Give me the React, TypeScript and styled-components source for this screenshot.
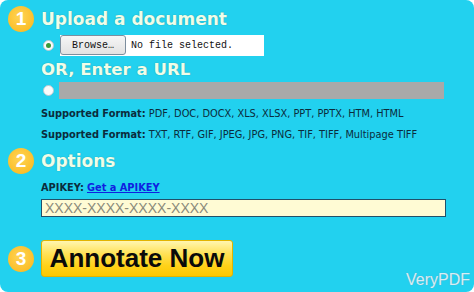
import styled, { createGlobalStyle } from 'styled-components'

const GlobalStyle = createGlobalStyle`
  html, body {
    margin: 0;
    padding: 0;
    background: #ffffff;
  }
`

const HEAD_FONT = `"DejaVu Sans", Verdana, sans-serif`

export default function App() {
  return (
    <>
      <GlobalStyle />
      <Panel>
        <StepHeader>
          <Badge>1</Badge>
          <Title>Upload a document</Title>
        </StepHeader>
        <ChoiceRow $height={26}>
          <Radio $checked />
          <FileBox>
            <BrowseButton>Browse…</BrowseButton>
            <FileText>No file selected.</FileText>
          </FileBox>
        </ChoiceRow>
        <SubTitle>OR, Enter a URL</SubTitle>
        <ChoiceRow $height={20}>
          <Radio />
          <UrlBar />
        </ChoiceRow>
        <Formats>
          <FormatLine>
            <b>Supported Format:</b> PDF, DOC, DOCX, XLS, XLSX, PPT, PPTX, HTM, HTML
          </FormatLine>
          <FormatLine>
            <b>Supported Format:</b> TXT, RTF, GIF, JPEG, JPG, PNG, TIF, TIFF, Multipage TIFF
          </FormatLine>
        </Formats>
        <StepHeader>
          <Badge>2</Badge>
          <Title>Options</Title>
        </StepHeader>
        <KeyLine>
          <b>APIKEY:</b> <KeyLink href="#">Get a APIKEY</KeyLink>
        </KeyLine>
        <KeyInput placeholder="XXXX-XXXX-XXXX-XXXX" />
        <ActionRow>
          <Badge>3</Badge>
          <AnnotateButton>Annotate Now</AnnotateButton>
        </ActionRow>
        <Mark>VeryPDF</Mark>
      </Panel>
    </>
  )
}

const Panel = styled.div`
  position: relative;
  box-sizing: border-box;
  width: 474px;
  height: 292px;
  background: #22d1ef;
  border-radius: 8px;
  padding: 6px 0 0 8px;
  display: flex;
  flex-direction: column;
  font-family: ${HEAD_FONT};
`

const StepHeader = styled.div`
  display: flex;
  align-items: center;
  gap: 7px;
  height: 26px;
`

const Badge = styled.div`
  width: 26px;
  height: 26px;
  border-radius: 50%;
  background: radial-gradient(circle at 45% 40%, #ffd455 0%, #fbbf2a 70%, #f0ac1c 100%);
  color: #ffffff;
  font-family: "Liberation Sans", Arial, sans-serif;
  font-weight: bold;
  font-size: 19px;
  display: flex;
  align-items: center;
  justify-content: center;
  flex-shrink: 0;
`

const Title = styled.div`
  color: #effde9;
  font-weight: bold;
  font-size: 17px;
  text-shadow: 0 0 1px rgba(0, 80, 60, 0.5);
`

const SubTitle = styled(Title)`
  margin-left: 33px;
  height: 22px;
  line-height: 24px;
  font-size: 16.6px;
`

const ChoiceRow = styled.div<{ $height: number }>`
  display: flex;
  align-items: center;
  height: ${(p) => p.$height}px;
  padding-left: 35px;
  gap: 6px;
`

const Radio = styled.span<{ $checked?: boolean }>`
  box-sizing: border-box;
  width: 11px;
  height: 11px;
  border-radius: 50%;
  background: #fbfbfb;
  border: 1px solid #b8c8d0;
  display: flex;
  align-items: center;
  justify-content: center;
  flex-shrink: 0;
  &::after {
    content: '';
    width: 5px;
    height: 5px;
    border-radius: 50%;
    background: ${(p) => (p.$checked ? '#3a9a3a' : 'transparent')};
  }
`

const FileBox = styled.div`
  display: flex;
  align-items: center;
  width: 204px;
  height: 21px;
  background: #ffffff;
`

const BrowseButton = styled.div`
  box-sizing: border-box;
  width: 66px;
  height: 20px;
  border: 1px solid #7d8e9e;
  border-radius: 3px;
  background: linear-gradient(#f6f6f6, #e2e2e2);
  font-family: "Liberation Mono", monospace;
  font-size: 10px;
  color: #111;
  display: flex;
  align-items: center;
  justify-content: center;
`

const FileText = styled.span`
  margin-left: 5px;
  font-family: "Liberation Mono", monospace;
  font-size: 10px;
  color: #111;
`

const UrlBar = styled.div`
  width: 385px;
  height: 17px;
  background: #a9a9a9;
  margin-left: -1px;
`

const Formats = styled.div`
  display: flex;
  flex-direction: column;
  padding-left: 33px;
  margin-top: 3px;
  margin-bottom: 3px;
`

const FormatLine = styled.div`
  height: 21px;
  line-height: 21px;
  font-size: 9.8px;
  color: #0b2c3c;
  white-space: nowrap;
  b {
    font-weight: bold;
  }
`

const KeyLine = styled(FormatLine)`
  margin-top: 5px;
  padding-left: 33px;
  height: 18px;
  line-height: 18px;
`

const KeyLink = styled.a`
  color: #1020e0;
  font-weight: bold;
  text-decoration: underline;
`

const KeyInput = styled.input`
  box-sizing: border-box;
  margin: 2px 0 0 33px;
  width: 405px;
  height: 18px;
  background: #fffbd4;
  border: 1px solid #20506a;
  padding: 0 3px;
  font-family: "Liberation Sans", Arial, sans-serif;
  font-size: 14px;
  outline: none;
  &::placeholder {
    color: #8a8a7a;
  }
`

const ActionRow = styled.div`
  display: flex;
  align-items: center;
  gap: 7px;
  margin-top: 23px;
`

const AnnotateButton = styled.button`
  box-sizing: border-box;
  width: 192px;
  height: 37px;
  border: 1px solid #e2b400;
  border-radius: 3px;
  background: linear-gradient(#fff6b0 0%, #ffe25a 35%, #ffd21a 70%, #fcc800 100%);
  font-family: "Liberation Sans", Arial, sans-serif;
  font-weight: bold;
  font-size: 26px;
  color: #0a0a0a;
  padding: 0;
  cursor: pointer;
`

const Mark = styled.div`
  position: absolute;
  right: 4px;
  bottom: 3px;
  font-family: "Liberation Sans", Arial, sans-serif;
  font-size: 16px;
  color: #d6eef6;
  text-shadow: 0 0 1px #6aa0b8;
`
